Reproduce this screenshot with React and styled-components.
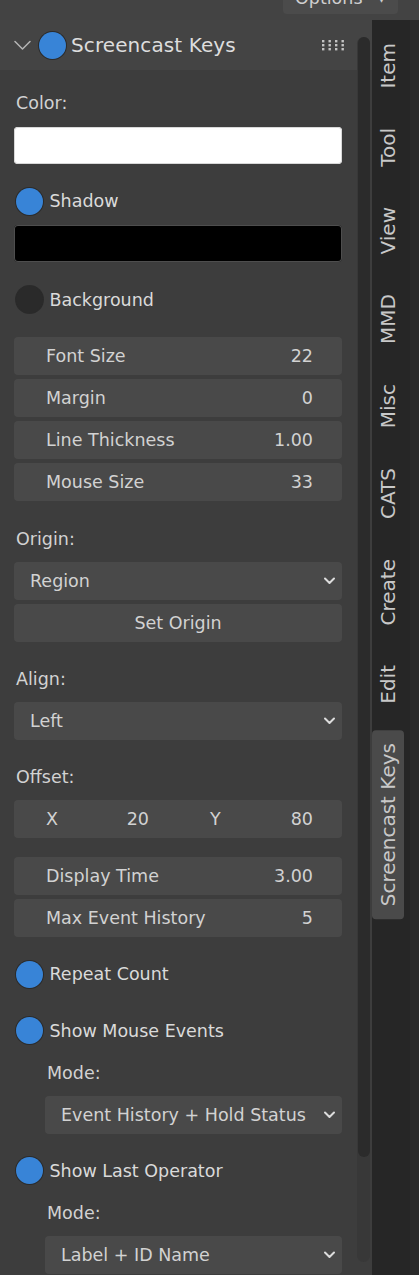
import React from "react";
import styled, { createGlobalStyle } from "styled-components";

const GlobalStyle = createGlobalStyle`
  html, body { margin: 0; padding: 0; background: #3d3d3d; }
  body { font-family: "DejaVu Sans", "Liberation Sans", sans-serif; }
  * { box-sizing: border-box; }
`;

const Page = styled.div`
  width: 419px;
  height: 1275px;
  overflow: hidden;
  display: flex;
  flex-direction: column;
  background: #424242;
`;

const TopStrip = styled.div`
  height: 20px;
  flex: none;
  display: flex;
  justify-content: flex-end;
  padding-right: 21px;
  background: #434343;
`;

const OptionsButton = styled.div`
  width: 115px;
  height: 14px;
  background: #4b4b4b;
  border-radius: 0 0 4px 4px;
  display: flex;
  align-items: flex-start;
  padding-left: 12px;
  overflow: hidden;
  color: #cfcfcf;
  font-size: 17.5px;
  line-height: 20px;
`;

const OptionsText = styled.span`
  margin-top: -12px;
  flex: 1;
`;

const OptionsArrow = styled.span`
  margin-top: -12px;
  width: 20px;
  font-size: 14px;
`;

const Main = styled.div`
  flex: 1;
  display: flex;
  min-height: 0;
`;

const Sidebar = styled.div`
  width: 372px;
  flex: none;
  position: relative;
  background: #3d3d3d;
  display: flex;
  flex-direction: column;
`;

const PanelHeader = styled.div`
  height: 50px;
  flex: none;
  display: flex;
  align-items: center;
  padding-left: 14px;
  background: #444444;
  color: #dddddd;
  font-size: 20px;
`;

const Title = styled.span`
  margin-left: 5px;
  letter-spacing: 0.1px;
`;

const Handle = styled.svg`
  margin-left: auto;
  margin-right: 26px;
`;

const Dot = styled.span`
  flex: none;
  width: 27px;
  height: 27px;
  border-radius: 50%;
  background: ${(p) => (p.$on ? "#3884d7" : "#2a2a2a")};
  box-shadow: 0 0 0 1px #2b2b2b;
  margin-left: ${(p) => p.$ml || 0}px;
`;

const Body = styled.div`
  padding: 14px 30px 0 14px;
  display: flex;
  flex-direction: column;
  gap: 18.4px;
  color: #d2d2d2;
  font-size: 17.5px;
`;

const Section = styled.div`
  display: flex;
  flex-direction: column;
  gap: 4px;
  padding-left: ${(p) => p.$indent || 0}px;
`;

const Label = styled.div`
  height: 38px;
  display: flex;
  align-items: center;
  padding-left: 2px;
`;

const ToggleRow = styled.div`
  height: 38px;
  display: flex;
  align-items: center;
  gap: 7px;
  padding-left: 1.5px;
  color: #dadada;
`;

const Swatch = styled.div`
  height: 38px;
  display: flex;
  align-items: center;
  &::before {
    content: "";
    display: block;
    width: 100%;
    height: 37px;
    border-radius: 4px;
    background: ${(p) => p.$color};
    box-shadow: inset 0 0 0 1px ${(p) => (p.$color === "#000000" ? "#4e4e4e" : "#d8d8d8")};
  }
`;

const Field = styled.div`
  height: 38px;
  border-radius: 4px;
  background: #494949;
  display: flex;
  align-items: center;
`;

const NumRow = styled(Field)`
  justify-content: space-between;
  padding: 0 29px 0 32px;
`;

const Half = styled.div`
  flex: 1;
  display: flex;
  justify-content: space-between;
  padding: 0 29px 0 32px;
`;

const SplitRow = styled(Field)``;

const Dropdown = styled(Field)`
  justify-content: space-between;
  padding: 0 7px 0 16px;
`;

const Button = styled(Field)`
  justify-content: center;
`;

const Scrollbar = styled.div`
  position: absolute;
  left: 357px;
  top: 17px;
  width: 13px;
  height: 1225px;
  border-radius: 7px;
  background: #383838;
`;

const Thumb = styled.div`
  width: 12px;
  margin-left: 1px;
  height: 1120px;
  border-radius: 6px;
  background: #2b2b2b;
`;

const TabBar = styled.div`
  flex: 1;
  background: #262626;
  border-right: 9px solid #2b2b2b;
  padding-top: 3px;
  display: flex;
  flex-direction: column;
`;

const Tab = styled.div`
  flex: none;
  width: 32px;
  margin: 6.9px 0;
  padding: 13px 0;
  writing-mode: vertical-rl;
  transform: rotate(180deg);
  line-height: 32px;
  font-size: 20px;
  color: #c8c8c8;
  white-space: nowrap;
  border-radius: 4px;
  background: ${(p) => (p.$active ? "#4a4a4a" : "transparent")};
`;

const Chevron = () => (
  <svg width="11" height="8" viewBox="0 0 11 8">
    <polyline points="1,1.5 5.5,6 10,1.5" fill="none" stroke="#dcdcdc" strokeWidth="2" strokeLinecap="round" strokeLinejoin="round" />
  </svg>
);

const HeaderChevron = () => (
  <svg width="17" height="11" viewBox="0 0 17 11">
    <polyline points="1,1.5 8.5,9 16,1.5" fill="none" stroke="#b5b5b5" strokeWidth="1.5" strokeLinecap="round" strokeLinejoin="round" />
  </svg>
);

const DragDots = () => {
  const dots = [];
  for (let r = 0; r < 3; r++) {
    for (let c = 0; c < 4; c++) {
      dots.push(<rect key={`${r}-${c}`} x={1 + c * 6.5} y={1 + r * 4} width="2.4" height="2.4" fill="#c4c4c4" />);
    }
  }
  return (
    <Handle width="25" height="12" viewBox="0 0 25 12">
      {dots}
    </Handle>
  );
};

const Num = ({ label, value }) => (
  <NumRow>
    <span>{label}</span>
    <span>{value}</span>
  </NumRow>
);

const Select = ({ value }) => (
  <Dropdown>
    <span>{value}</span>
    <Chevron />
  </Dropdown>
);

const Toggle = ({ on, children }) => (
  <ToggleRow>
    <Dot $on={on} />
    <span>{children}</span>
  </ToggleRow>
);

const tabs = ["Item", "Tool", "View", "MMD", "Misc", "CATS", "Create", "Edit", "Screencast Keys"];

export default function App() {
  return (
    <>
      <GlobalStyle />
      <Page>
        <TopStrip>
          <OptionsButton>
            <OptionsText>Options</OptionsText>
            <OptionsArrow>▾</OptionsArrow>
          </OptionsButton>
        </TopStrip>
        <Main>
          <Sidebar>
            <PanelHeader>
              <HeaderChevron />
              <Dot $on $ml={8} />
              <Title>Screencast Keys</Title>
              <DragDots />
            </PanelHeader>
            <Body>
              <Section>
                <Label>Color:</Label>
                <Swatch $color="#ffffff" />
              </Section>
              <Section>
                <Toggle on>Shadow</Toggle>
                <Swatch $color="#000000" />
              </Section>
              <Section>
                <Toggle>Background</Toggle>
              </Section>
              <Section>
                <Num label="Font Size" value="22" />
                <Num label="Margin" value="0" />
                <Num label="Line Thickness" value="1.00" />
                <Num label="Mouse Size" value="33" />
              </Section>
              <Section>
                <Label>Origin:</Label>
                <Select value="Region" />
                <Button>Set Origin</Button>
              </Section>
              <Section>
                <Label>Align:</Label>
                <Select value="Left" />
              </Section>
              <Section>
                <Label>Offset:</Label>
                <SplitRow>
                  <Half>
                    <span>X</span>
                    <span>20</span>
                  </Half>
                  <Half>
                    <span>Y</span>
                    <span>80</span>
                  </Half>
                </SplitRow>
              </Section>
              <Section>
                <Num label="Display Time" value="3.00" />
                <Num label="Max Event History" value="5" />
              </Section>
              <Section>
                <Toggle on>Repeat Count</Toggle>
              </Section>
              <Section>
                <Toggle on>Show Mouse Events</Toggle>
                <Section $indent={31}>
                  <Label>Mode:</Label>
                  <Select value="Event History + Hold Status" />
                </Section>
              </Section>
              <Section>
                <Toggle on>Show Last Operator</Toggle>
                <Section $indent={31}>
                  <Label>Mode:</Label>
                  <Select value="Label + ID Name" />
                </Section>
              </Section>
            </Body>
            <Scrollbar>
              <Thumb />
            </Scrollbar>
          </Sidebar>
          <TabBar>
            {tabs.map((t) => (
              <Tab key={t} $active={t === "Screencast Keys"}>
                {t}
              </Tab>
            ))}
          </TabBar>
        </Main>
      </Page>
    </>
  );
}
